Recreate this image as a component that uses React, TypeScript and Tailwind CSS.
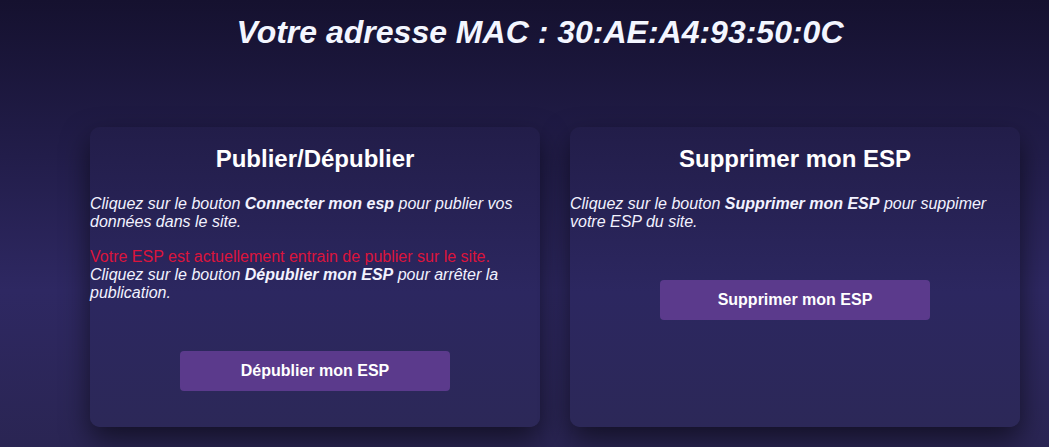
import React from "react";

function Card({ title, children, button }: { title: string; children: React.ReactNode; button: string }) {
  return (
    <div className="w-[450px] h-[300px] rounded-[10px] bg-[linear-gradient(to_bottom,#221d49_0%,#2c2760_55%,#2c2858_100%)] shadow-[0_12px_28px_rgba(0,0,0,0.55)] flex flex-col">
      <h2 className="pt-[18px] text-center text-[24px] leading-[27.6px] font-bold text-white">{title}</h2>
      <div className="mt-[23px] text-[16px] leading-[18px] italic text-[#f2f2ff]">{children}</div>
      <div className="mt-[49px] flex justify-center">
        <button className="w-[270px] h-[40px] rounded-[4px] bg-[#5b3a8c] text-white text-[16px] font-bold not-italic">
          {button}
        </button>
      </div>
    </div>
  );
}

export default function App() {
  return (
    <div
      className="w-[1049px] h-[447px] overflow-hidden bg-[linear-gradient(to_bottom,#15112f_0%,#221d4a_35%,#2e2862_65%,#2a2553_100%)]"
      style={{ fontFamily: '"Liberation Sans", Arial, sans-serif' }}
    >
      <h1 className="pt-[14px] pl-[31px] text-center text-[32px] leading-[36.8px] font-bold italic text-[#f3f6ff]">
        Votre adresse MAC : 30:AE:A4:93:50:0C
      </h1>
      <div className="mt-[76px] pl-[90px] flex gap-[30px]">
        <Card title="Publier/Dépublier" button="Dépublier mon ESP">
          <p>
            Cliquez sur le bouton <b>Connecter mon esp</b> pour publier vos données dans le site.
          </p>
          <p className="mt-[17px] pr-[10px]">
            <span className="not-italic text-[#dc143c]">Votre ESP est actuellement entrain de publier sur le site.</span>
            <br />
            Cliquez sur le bouton <b>Dépublier mon ESP</b> pour arrêter la publication.
          </p>
        </Card>
        <Card title="Supprimer mon ESP" button="Supprimer mon ESP">
          <p>
            Cliquez sur le bouton <b>Supprimer mon ESP</b> pour suppimer votre ESP du site.
          </p>
        </Card>
      </div>
    </div>
  );
}
